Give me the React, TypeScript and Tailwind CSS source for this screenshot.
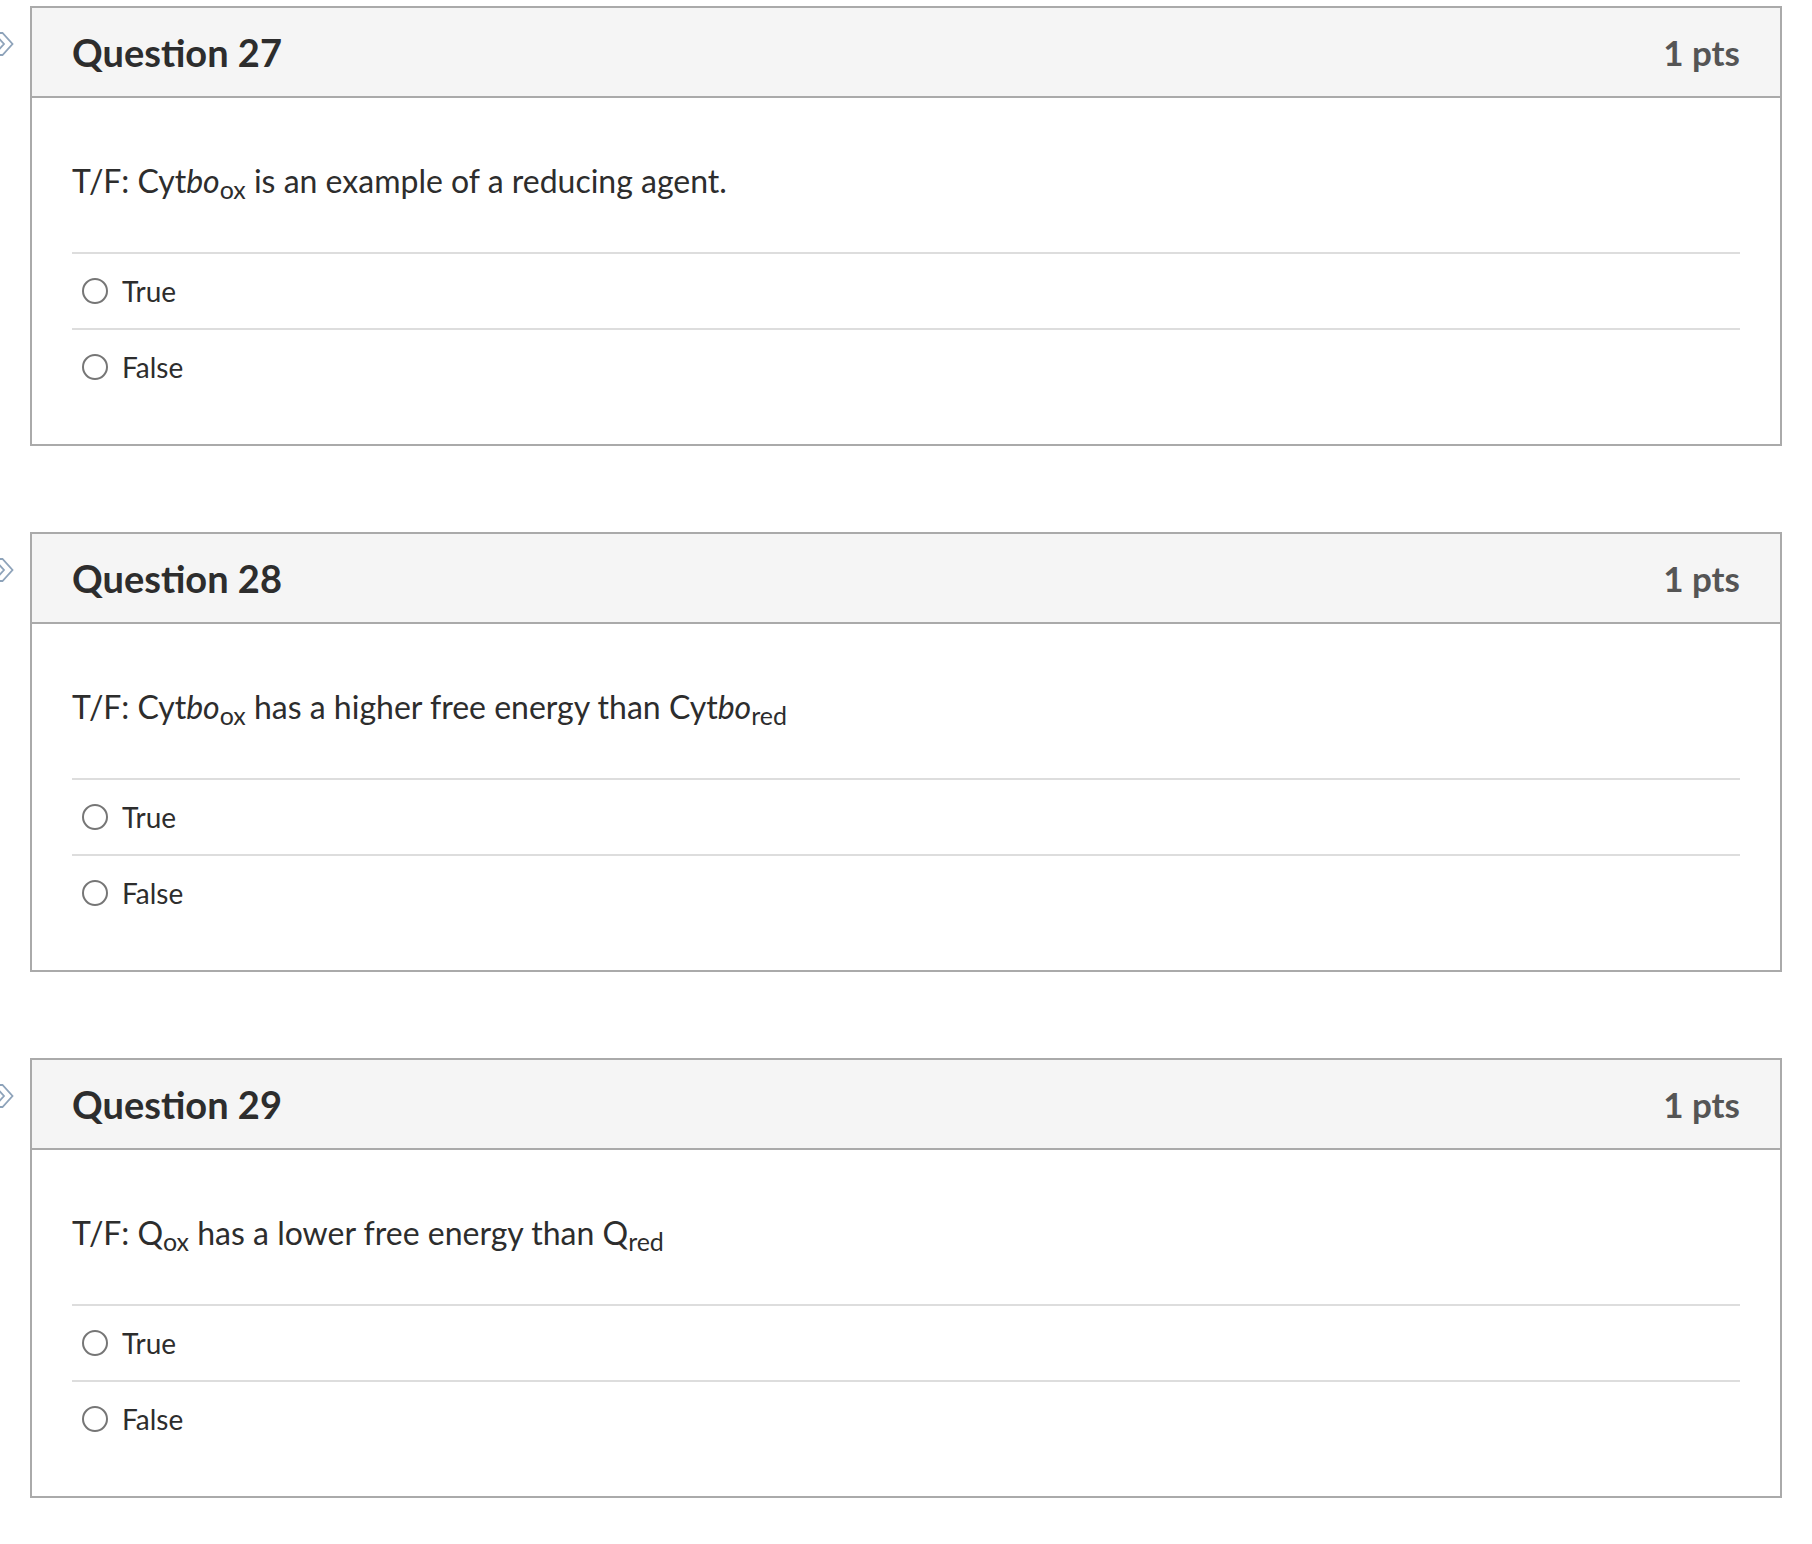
import React from "react";

function Chevron() {
  return (
    <svg
      className="absolute left-[-30px] top-[26px]"
      width="14"
      height="24"
      viewBox="0 0 14 24"
      fill="none"
    >
      <polygon
        points="-6,1 2.5,1 12.5,12 2.5,23 -6,23 4,12"
        stroke="#8ea3ba"
        strokeWidth="1.8"
        strokeLinejoin="miter"
        fill="#ffffff"
      />
    </svg>
  );
}

function Radio({ label }: { label: string }) {
  return (
    <div className="flex h-[76px] items-center border-t-2 border-[#dddddd] pl-[10px]">
      <span className="box-border h-[26px] w-[26px] rounded-full border-2 border-[#767676] bg-white" />
      <span className="ml-[14px] text-[28px] text-[#2d2d2d]">{label}</span>
    </div>
  );
}

function Card({ n, children }: { n: number; children: React.ReactNode }) {
  return (
    <div className="relative">
      <Chevron />
      <div className="border-2 border-[#aaaaaa] bg-white">
        <div className="flex h-[90px] items-center justify-between border-b-2 border-[#aaaaaa] bg-[#f5f5f5] px-[40px]">
          <span className="text-[38px] font-bold text-[#2d2d2d]">Question {n}</span>
          <span className="text-[35px] font-bold text-[#555555]">1 pts</span>
        </div>
        <div className="px-[40px] pb-[40px]">
          <div className="flex h-[154px] items-center pt-[12px] text-[32px] text-[#2d2d2d]">
            <p>{children}</p>
          </div>
          <Radio label="True" />
          <Radio label="False" />
        </div>
      </div>
    </div>
  );
}

function Sub({ children }: { children: React.ReactNode }) {
  return <sub className="relative bottom-[-0.25em] align-baseline text-[0.78em]">{children}</sub>;
}

export default function App() {
  return (
    <div
      className="min-h-[1544px] w-[1812px] bg-white pt-[6px] pl-[30px] pr-[30px]"
      style={{ fontFamily: "Lato, 'Open Sans', sans-serif" }}
    >
      <div className="flex flex-col gap-[86px]">
        <Card n={27}>
          T/F: Cyt<i>bo</i>
          <Sub>ox</Sub> is an example of a reducing agent.
        </Card>
        <Card n={28}>
          T/F: Cyt<i>bo</i>
          <Sub>ox</Sub> has a higher free energy than Cyt<i>bo</i>
          <Sub>red</Sub>
        </Card>
        <Card n={29}>
          T/F: Q<Sub>ox</Sub> has a lower free energy than Q<Sub>red</Sub>
        </Card>
      </div>
    </div>
  );
}
